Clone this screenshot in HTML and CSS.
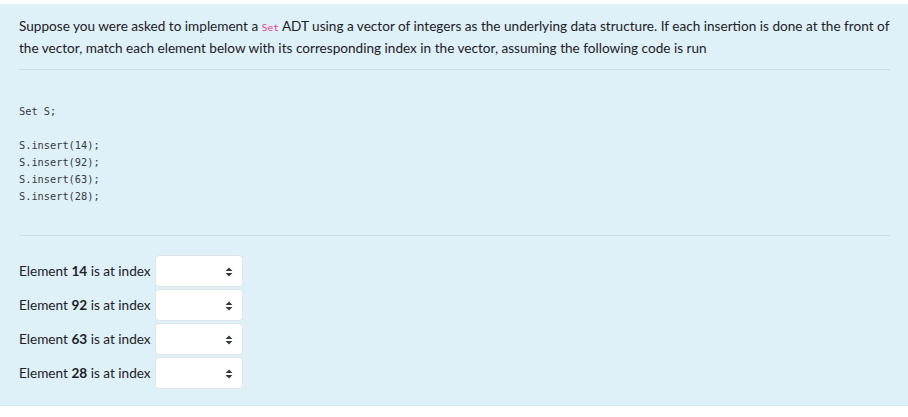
FILE: index.html
```html
<!DOCTYPE html>
<html>
<head>
<meta charset="utf-8">
<link rel="stylesheet" href="styles.css">
</head>
<body>
<div class="formulation">
  <p class="qtext">Suppose you were asked to implement a <code class="inline">Set</code> ADT using a vector of integers as the underlying data structure. If each insertion is done at the front of the vector, match each element below with its corresponding index in the vector, assuming the following code is run</p>
  <hr class="rule">
  <pre class="code">Set S;

S.insert(14);
S.insert(92);
S.insert(63);
S.insert(28);</pre>
  <hr class="rule rule-low">
  <div class="answers">
    <div class="row"><span class="label">Element <b>14</b> is at index</span><div class="select"><svg class="arrow" width="8" height="10" viewBox="0 0 8 10"><path d="M4 0.5 L7.5 4 H0.5 Z M4 9.5 L7.5 6 H0.5 Z" fill="#343a40"/></svg></div></div>
    <div class="row"><span class="label">Element <b>92</b> is at index</span><div class="select"><svg class="arrow" width="8" height="10" viewBox="0 0 8 10"><path d="M4 0.5 L7.5 4 H0.5 Z M4 9.5 L7.5 6 H0.5 Z" fill="#343a40"/></svg></div></div>
    <div class="row"><span class="label">Element <b>63</b> is at index</span><div class="select"><svg class="arrow" width="8" height="10" viewBox="0 0 8 10"><path d="M4 0.5 L7.5 4 H0.5 Z M4 9.5 L7.5 6 H0.5 Z" fill="#343a40"/></svg></div></div>
    <div class="row"><span class="label">Element <b>28</b> is at index</span><div class="select"><svg class="arrow" width="8" height="10" viewBox="0 0 8 10"><path d="M4 0.5 L7.5 4 H0.5 Z M4 9.5 L7.5 6 H0.5 Z" fill="#343a40"/></svg></div></div>
  </div>
</div>
</body>
</html>
```
FILE: styles.css
```css
html, body {
  margin: 0;
  padding: 0;
  background: #ffffff;
}
body {
  font-family: "Lato", "Noto Sans", sans-serif;
  font-size: 13.6px;
  color: #1d2125;
}
.formulation {
  margin-top: 4px;
  background: #def0f8;
  border-bottom: 1px solid #d6e9f2;
  padding: 12px 3px 14px 19px;
  height: 375px;
}
.qtext {
  margin: 0;
  line-height: 21px;
}
.inline {
  font-family: "DejaVu Sans Mono", monospace;
  font-size: 9.5px;
  color: #e83e8c;
}
.rule {
  border: 0;
  border-top: 1px solid #c9dfe8;
  margin: 10px 15px 0 0;
}
.code {
  margin: 33px 0 0 0;
  font-family: "DejaVu Sans Mono", monospace;
  font-size: 10.3px;
  line-height: 17px;
  color: #333a40;
}
.rule-low {
  margin-top: 30px;
}
.answers {
  margin-top: 19px;
  display: flex;
  flex-direction: column;
  gap: 2px;
}
.row {
  display: flex;
  align-items: center;
}
.label {
  flex: 0 0 136px;
  white-space: nowrap;
}
.select {
  width: 88px;
  height: 32px;
  background: #ffffff;
  border: 1px solid #dfe4e8;
  border-radius: 4px;
  display: flex;
  align-items: center;
  justify-content: flex-end;
  padding-right: 9px;
  box-sizing: border-box;
}
.arrow {
  display: block;
  margin-top: 2px;
}
```
